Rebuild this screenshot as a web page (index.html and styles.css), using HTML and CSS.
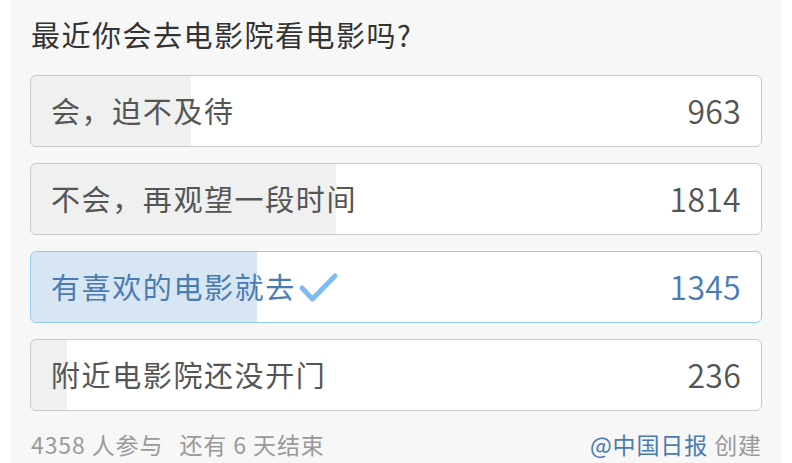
FILE: index.html
```html
<!DOCTYPE html>
<html lang="zh-CN">
<head>
<meta charset="utf-8">
<title>投票</title>
<link rel="stylesheet" href="styles.css">
</head>
<body>
<div class="panel">
  <h1 class="title">最近你会去电影院看电影吗?</h1>
  <ul class="options">
    <li class="option" style="--pct:21.9%"><span class="label">会，迫不及待</span><span class="count">963</span></li>
    <li class="option" style="--pct:41.8%"><span class="label">不会，再观望一段时间</span><span class="count">1814</span></li>
    <li class="option selected" style="--pct:30.9%"><span class="label">有喜欢的电影就去<svg class="check" width="42" height="34" viewBox="0 0 42 34"><path d="M4 17 L14.5 28 L37 5" fill="none" stroke="#7dbcf3" stroke-width="5" stroke-linecap="round" stroke-linejoin="round"/></svg></span><span class="count">1345</span></li>
    <li class="option" style="--pct:4.9%"><span class="label">附近电影院还没开门</span><span class="count">236</span></li>
  </ul>
  <div class="footer">
    <span class="meta">4358 人参与<span class="sep"></span>还有 6 天结束</span>
    <span class="creator"><span class="author">@中国日报</span> 创建</span>
  </div>
</div>
</body>
</html>
```

FILE: styles.css
```css
html, body {
  margin: 0;
  padding: 0;
  background: #ffffff;
}
body {
  font-family: "Noto Sans CJK SC", "Noto Sans", sans-serif;
  width: 792px;
  height: 463px;
  overflow: hidden;
}
.panel {
  margin: 0 10px;
  background: #f7f7f7;
  padding: 14px 20px 0 20px;
  height: 463px;
  box-sizing: border-box;
}
.title {
  margin: 0 0 0 1px;
  font-size: 29px;
  line-height: 40px;
  font-weight: 400;
  color: #333333;
  letter-spacing: 1.5px;
}
.options {
  list-style: none;
  margin: 21px 0 0 0;
  padding: 0;
  display: flex;
  flex-direction: column;
  gap: 16px;
}
.option {
  height: 72px;
  box-sizing: border-box;
  border: 1px solid #c9c9c9;
  border-radius: 6px;
  display: flex;
  align-items: center;
  justify-content: space-between;
  padding: 0 20px 2px 20px;
  background: linear-gradient(to right, #f0f0f0 var(--pct), #ffffff var(--pct));
  color: #555555;
}
.label {
  font-size: 29px;
  letter-spacing: 1.6px;
  display: flex;
  align-items: center;
}
.count {
  font-size: 32px;
  font-weight: 350;
  color: #555555;
  letter-spacing: 0.3px;
}
.option.selected {
  border-color: #93cbf3;
  background: linear-gradient(to right, #d8e6f3 var(--pct), #ffffff var(--pct));
  color: #4a7bb3;
}
.option.selected .count {
  color: #4a7bb3;
}
.check {
  margin-left: 2px;
  margin-top: 4px;
}
.footer {
  display: flex;
  justify-content: space-between;
  align-items: center;
  margin-top: 16px;
  font-size: 23px;
  letter-spacing: 0.9px;
  color: #999999;
}
.meta {
  padding-left: 1px;
}
.sep {
  display: inline-block;
  width: 16px;
}
.author {
  color: #4a7bb3;
}
```
